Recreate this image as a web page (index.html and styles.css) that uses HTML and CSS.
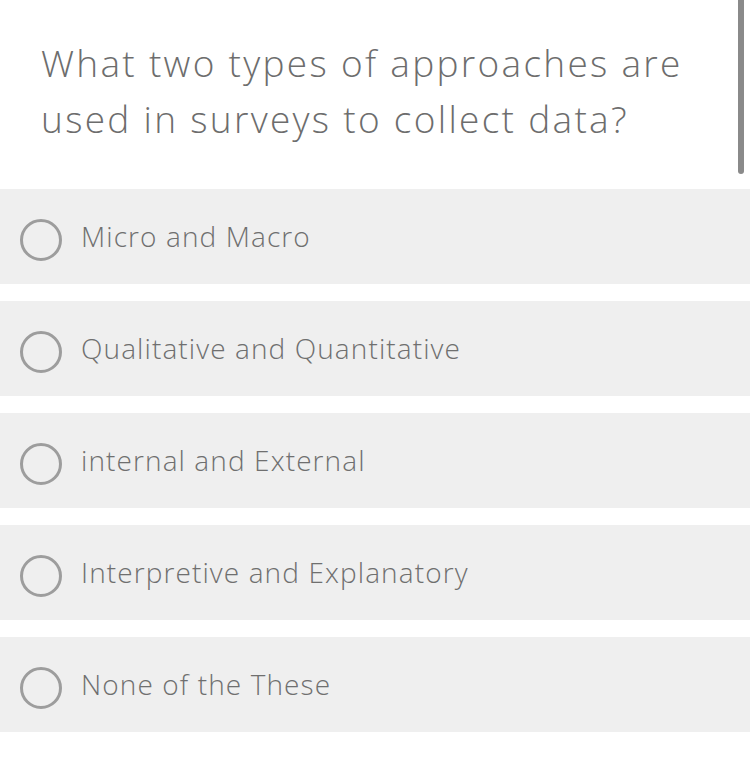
FILE: index.html
```html
<!DOCTYPE html>
<html>
<head>
<meta charset="utf-8">
<link rel="stylesheet" href="styles.css">
</head>
<body>
<div class="page">
  <div class="scrollbar"></div>
  <h1 class="question">What two types of approaches are used in surveys to collect data?</h1>
  <div class="options">
    <div class="option"><span class="radio"></span><span class="label">Micro and Macro</span></div>
    <div class="option"><span class="radio"></span><span class="label">Qualitative and Quantitative</span></div>
    <div class="option"><span class="radio"></span><span class="label">internal and External</span></div>
    <div class="option"><span class="radio"></span><span class="label">Interpretive and Explanatory</span></div>
    <div class="option"><span class="radio"></span><span class="label">None of the These</span></div>
  </div>
</div>
</body>
</html>
```
FILE: styles.css
```css
html, body {
  margin: 0;
  padding: 0;
  background: #ffffff;
}
body {
  font-family: "Open Sans", "Liberation Sans", sans-serif;
  width: 750px;
  height: 766px;
  overflow: hidden;
}
.page {
  position: relative;
  padding-top: 35px;
}
.scrollbar {
  position: absolute;
  top: 0;
  left: 738px;
  width: 6px;
  height: 174px;
  background: #8a8a8a;
  border-radius: 0 0 3px 3px;
}
.question {
  margin: 0 0 42px 0;
  padding: 0 40px 0 41px;
  font-size: 37px;
  line-height: 56px;
  font-weight: 300;
  letter-spacing: 2.3px;
  color: #6d6d6d;
}
.options {
  display: flex;
  flex-direction: column;
  gap: 17px;
}
.option {
  height: 95px;
  background: #efefef;
  display: flex;
  align-items: center;
  padding-left: 20px;
}
.radio {
  width: 36px;
  height: 36px;
  border: 3px solid #9d9d9d;
  border-radius: 50%;
  margin-top: 7px;
  flex: none;
}
.label {
  margin-left: 19px;
  margin-top: -2px;
  font-size: 28px;
  font-weight: 300;
  letter-spacing: 1.1px;
  color: #6f6f6f;
}
```
